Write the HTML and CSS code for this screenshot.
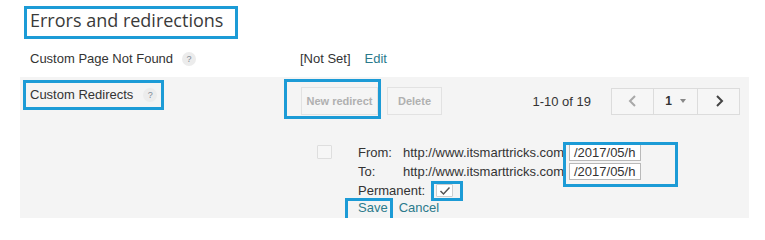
FILE: index.html
```html
<!DOCTYPE html>
<html>
<head>
<meta charset="utf-8">
<link rel="stylesheet" href="styles.css">
</head>
<body>
<div class="page">
  <header class="head">
    <h1 class="title">Errors and redirections<span class="hl hl-title"></span></h1>
  </header>

  <div class="row row-404">
    <div class="label">Custom Page Not Found<span class="help">?</span></div>
    <div class="value">[Not Set]<a class="link edit-link">Edit</a></div>
  </div>

  <section class="panel">
    <div class="panel-top">
      <div class="label label-redirects">Custom Redirects<span class="help">?</span><span class="hl hl-redirects"></span></div>
      <div class="toolbar">
        <button class="btn btn-new">New redirect<span class="hl hl-new"></span></button>
        <button class="btn btn-delete">Delete</button>
        <span class="count">1-10 of 19</span>
        <div class="pager">
          <span class="pg pg-prev"><svg width="10" height="14" viewBox="0 0 10 14"><polyline points="7,2 2,7 7,12" fill="none" stroke="#a8a8a8" stroke-width="2"/></svg></span>
          <span class="pg pg-num">1<span class="caret"></span></span>
          <span class="pg pg-next"><svg width="10" height="14" viewBox="0 0 10 14"><polyline points="3,2 8,7 3,12" fill="none" stroke="#444" stroke-width="2"/></svg></span>
        </div>
      </div>
    </div>

    <div class="edit">
      <div class="edit-cell">
        <span class="cb"></span>
        <div class="form">
          <div class="frow"><span class="flab">From:</span><span class="url">http://www.itsmarttricks.com</span><span class="field">/2017/05/h</span></div>
          <div class="frow"><span class="flab">To:</span><span class="url">http://www.itsmarttricks.com</span><span class="field">/2017/05/h</span></div>
          <div class="frow frow-perm"><span class="perm-lab">Permanent:</span><span class="cb cb-checked"><svg width="12" height="10" viewBox="0 0 12 10"><polyline points="1.5,5 4.5,8 10.5,1.5" fill="none" stroke="#555" stroke-width="1.5"/></svg><span class="hl hl-perm"></span></span></div>
          <div class="actions"><a class="link save-link">Save<span class="hl hl-save"></span></a><a class="link">Cancel</a></div>
          <span class="hl hl-fields"></span>
        </div>
      </div>
    </div>
  </section>
</div>
</body>
</html>
```

FILE: styles.css
```css
* { box-sizing: border-box; }

html, body {
  margin: 0;
  background: #ffffff;
}

body {
  font-family: "Liberation Sans", Arial, sans-serif;
  font-size: 13px;
  color: #333;
  width: 765px;
  height: 218px;
  overflow: hidden;
}

.page {
  padding: 0 16px 0 20px;
}

.head {
  height: 40px;
  padding-left: 10px;
}

.title {
  position: relative;
  display: inline-block;
  margin: 0;
  font-family: "Open Sans", sans-serif;
  font-weight: 400;
  font-size: 18px;
  line-height: 40px;
  color: #3a3a3a;
}

.hl {
  position: absolute;
  border: 3px solid #1c9bd6;
  pointer-events: none;
}

.hl-title { left: -6px; top: 6px; width: 214px; height: 33px; }

.row {
  display: grid;
  grid-template-columns: 270px 1fr;
  padding-left: 10px;
  height: 37px;
  line-height: 37px;
}

.label {
  display: flex;
  align-items: center;
  color: #333;
}

.help {
  display: inline-block;
  width: 14px;
  height: 14px;
  margin-left: 9px;
  border-radius: 50%;
  background: #ececec;
  color: #7d8a96;
  font-size: 9px;
  line-height: 14px;
  text-align: center;
}

.value { color: #333; }

.link {
  color: #2b7a8c;
  text-decoration: none;
  cursor: pointer;
}

.edit-link { margin-left: 14px; }

.panel {
  background: #f4f4f4;
  width: 729px;
  height: 160px;
  padding: 10px 9px 0 10px;
}

.panel-top {
  display: grid;
  grid-template-columns: 270px 1fr;
  height: 28px;
}

.label-redirects {
  position: relative;
  align-self: start;
  height: 15px;
  line-height: 15px;
}

.label-redirects .help { margin-left: 10px; }

.hl-redirects { left: -7px; top: -7px; width: 141px; height: 30px; }

.toolbar {
  display: flex;
  align-items: center;
  height: 28px;
}

.btn {
  position: relative;
  height: 28px;
  padding: 0;
  border: 1px solid #e2e2e2;
  background: #f5f5f5;
  color: #b0b0b0;
  font-family: "Liberation Sans", Arial, sans-serif;
  font-size: 11px;
  font-weight: 700;
  margin-left: 1px;
}

.btn-new { width: 77px; }
.btn-delete { width: 55px; margin-left: 9px; }

.hl-new { left: -18px; top: -9px; width: 97px; height: 40px; }

.count {
  margin-left: auto;
  margin-right: 20px;
  color: #333;
  font-size: 13px;
}

.pager {
  display: flex;
  height: 27px;
  border: 1px solid #dcdcdc;
  background: #f6f6f6;
}

.pg {
  display: flex;
  align-items: center;
  justify-content: center;
  height: 100%;
}

.pg-prev { width: 41px; }
.pg-num {
  width: 45px;
  border-left: 1px solid #dcdcdc;
  border-right: 1px solid #dcdcdc;
  font-size: 12px;
  font-weight: 700;
  color: #333;
}
.pg-next { width: 41px; }

.caret {
  display: inline-block;
  margin-left: 8px;
  width: 0;
  height: 0;
  border-left: 3.5px solid transparent;
  border-right: 3.5px solid transparent;
  border-top: 4px solid #888;
}

.edit {
  display: grid;
  grid-template-columns: 270px 1fr;
  margin-top: 28px;
}

.edit-cell {
  grid-column: 2;
  display: flex;
  align-items: flex-start;
}

.cb {
  position: relative;
  display: inline-flex;
  align-items: center;
  justify-content: center;
  width: 15px;
  height: 14px;
  border: 1px solid #dedede;
  background: #f6f6f6;
  border-radius: 1px;
}

.edit-cell > .cb {
  margin-left: 17px;
  margin-top: 2px;
}

.form {
  position: relative;
  margin-left: 26px;
}

.frow {
  display: flex;
  align-items: center;
  height: 19px;
  white-space: nowrap;
}

.flab { width: 45px; }

.url { width: 166px; }

.field {
  width: 72px;
  height: 17px;
  border: 1px solid #b9b9b9;
  background: #fff;
  padding-left: 4px;
  line-height: 15px;
  white-space: nowrap;
  color: #333;
}

.frow-perm { height: 18px; }

.cb-checked {
  margin-left: 11px;
  width: 17px;
  height: 13px;
  background: #fff;
  border-color: #cfcfcf;
  margin-top: 1px;
}

.hl-perm { left: -6px; top: -4px; width: 32px; height: 20px; }

.actions {
  display: flex;
  height: 15px;
  line-height: 15px;
  margin-top: 1px;
}

.save-link {
  position: relative;
  display: inline-block;
  margin-right: 11px;
}

.hl-save { left: -13px; top: -2px; width: 48px; height: 24px; }

.hl-fields { left: 205px; top: -1px; width: 115px; height: 45px; }
```
